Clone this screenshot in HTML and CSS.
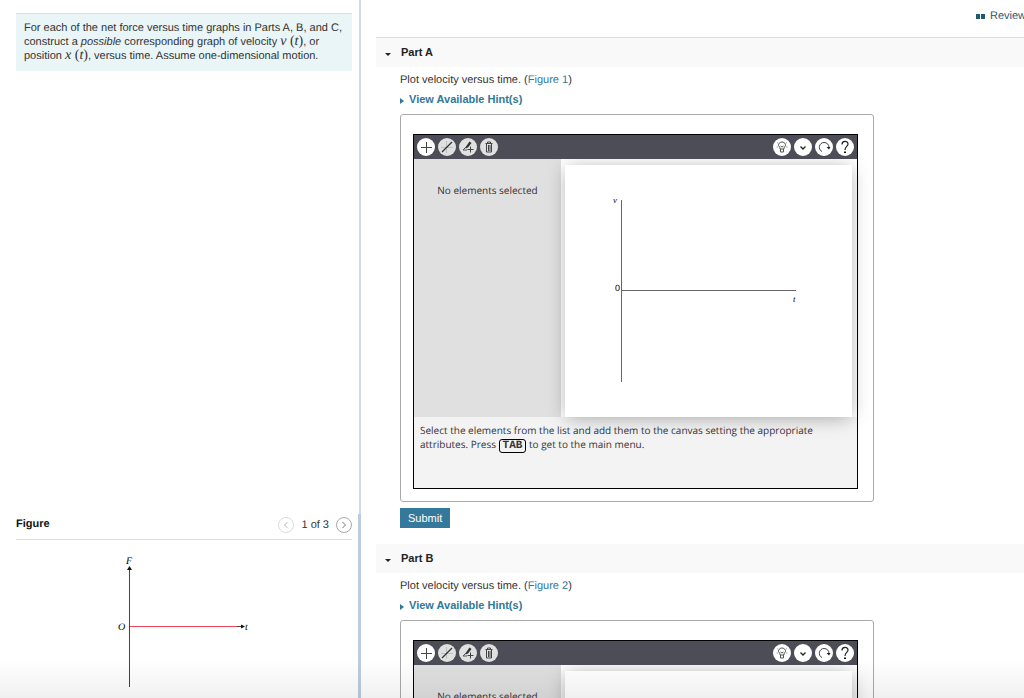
FILE: index.html
```html
<!DOCTYPE html>
<html lang="en">

<head>
    <meta charset="UTF-8">
    <title>Net Force and Velocity Graphs</title>
    <link rel="stylesheet" href="styles.css">
</head>

<body>

    <!-- shared toolbar icons -->
    <svg class="sprite" aria-hidden="true">
        <symbol id="icon-plus" viewBox="0 0 18 18">
            <path d="M9.500 4v11M4 9.500h11" stroke="#444" fill="none" />
        </symbol>
        <symbol id="icon-line" viewBox="0 0 18 18">
            <path d="M8.500 3v12M3 9.500h12" stroke="#c0c0c0" fill="none" />
            <path d="M4 14L14 4" stroke="#333" stroke-width="1.200" fill="none" />
        </symbol>
        <symbol id="icon-pen" viewBox="0 0 18 18">
            <path d="M10.500 3.500l2 1.500L9 9.500L6.500 10.500L7 8.500z" fill="#333" />
            <path d="M7 9L4 12h4" stroke="#555" fill="none" />
            <path d="M11.500 8.500v6M8.500 11.500h6" stroke="#444" fill="none" />
        </symbol>
        <symbol id="icon-trash" viewBox="0 0 18 18">
            <path d="M5.500 5.500h7M7.500 5V4h3v1M6.500 6v8h5V6M8.500 7v6M10 7v6" stroke="#444" fill="none" />
        </symbol>
        <symbol id="icon-bulb" viewBox="0 0 18 18">
            <path d="M7 11V9.500C4 7.500 6 4 9 4s5 3.500 2 5.500V11zM7.500 11v3h3v-3M7.500 8L9 9l1.500-1" stroke="#555" fill="none" />
            <path d="M4 4.500l1.500 1M14 4.500l-1.500 1M3.500 9h1.500M13 9h1.500" stroke="#aaa" fill="none" />
        </symbol>
        <symbol id="icon-chevron" viewBox="0 0 18 18">
            <path d="M6.500 8.500L9 11l2.500-2.500" stroke="#222" stroke-width="1.300" fill="none" />
        </symbol>
        <symbol id="icon-reset" viewBox="0 0 18 18">
            <path d="M7 13.500C2.500 11.500 4 4.500 9 4.500c3 0 5 2 5 5" stroke="#444" fill="none" />
            <path d="M11.500 9h4L14 11.500z" fill="#222" />
        </symbol>
        <symbol id="icon-help" viewBox="0 0 18 18">
            <path d="M6 6.500C6 2.500 12 2.500 12 6C12 8.500 9 8.500 9 12" stroke="#222" stroke-width="1.200" fill="none" />
            <path d="M8 13.500h2v1.500h-2z" fill="#111" />
        </symbol>
    </svg>

    <aside class="left">
        <section class="intro">
            For each of the net force versus time graphs in Parts A, B, and C, construct a <em>possible</em> corresponding graph of velocity <span class="math"><i>v</i> (<i>t</i>)</span>, or position <span class="math"><i>x</i> (<i>t</i>)</span>, versus time. Assume one-dimensional motion.
        </section>

        <section class="figure">
            <div class="figure-head">
                <h2>Figure</h2>
                <div class="pager">
                    <button type="button" aria-label="Previous figure" disabled>
                        <svg viewBox="0 0 14 14"><path d="M8.500 4l-3 3l3 3" /></svg>
                    </button>
                    <span>1 of 3</span>
                    <button type="button" aria-label="Next figure">
                        <svg viewBox="0 0 14 14"><path d="M5.500 4l3 3l-3 3" /></svg>
                    </button>
                </div>
            </div>
            <svg class="force-graph" viewBox="0 0 150 150" role="img" aria-label="Net force versus time">
                <path d="M17.500 27v120" stroke="#444" />
                <path d="M17.500 86.500h113" stroke="#444" />
                <path d="M18 86.500h107" stroke="#f04860" />
                <path d="M15 30l2.500-4l2.500 4zM129 84.500l4 2l-4 2z" fill="#111" />
                <text x="14" y="24">F</text>
                <text x="6" y="90">O</text>
                <text x="133" y="90">t</text>
            </svg>
        </section>
    </aside>

    <main class="right">
        <nav class="top">
            <a href="#review">
                <svg viewBox="0 0 9 6" aria-hidden="true"><path d="M0 1h4v5H0zM5 1h4v5H5z" /></svg>
                Review
            </a>
        </nav>

        <section class="part">
            <h2 class="part-head first"><button type="button">Part A</button></h2>
            <div class="part-body">
                <p>Plot velocity versus time. (<a href="#figure1">Figure 1</a>)</p>
                <button type="button" class="hints">View Available Hint(s)</button>
                <div class="answer">
                    <div class="editor">
                        <div class="toolbar">
                            <button type="button" aria-label="Add element"><svg><use href="#icon-plus" /></svg></button>
                            <button type="button" aria-label="Add line" class="off"><svg><use href="#icon-line" /></svg></button>
                            <button type="button" aria-label="Edit" class="off"><svg><use href="#icon-pen" /></svg></button>
                            <button type="button" aria-label="Delete" class="off"><svg><use href="#icon-trash" /></svg></button>
                            <span class="space"></span>
                            <button type="button" aria-label="Hint"><svg><use href="#icon-bulb" /></svg></button>
                            <button type="button" aria-label="More"><svg><use href="#icon-chevron" /></svg></button>
                            <button type="button" aria-label="Reset"><svg><use href="#icon-reset" /></svg></button>
                            <button type="button" aria-label="Help"><svg><use href="#icon-help" /></svg></button>
                        </div>
                        <div class="work">
                            <div class="elements">No elements selected</div>
                            <div class="canvas">
                                <svg viewBox="0 0 287 252" role="img" aria-label="Velocity versus time">
                                    <path d="M56.500 35v182M56 125.500h175" stroke="#666" fill="none" />
                                    <text x="48" y="38" class="axis-name">v</text>
                                    <text x="50" y="126" class="axis-zero">0</text>
                                    <text x="228" y="137" class="axis-name">t</text>
                                </svg>
                            </div>
                        </div>
                        <div class="help">Select the elements from the list and add them to the canvas setting the appropriate attributes. Press <kbd>TAB</kbd> to get to the main menu.</div>
                    </div>
                </div>
                <button type="submit" class="submit">Submit</button>
            </div>
        </section>

        <section class="part">
            <h2 class="part-head"><button type="button">Part B</button></h2>
            <div class="part-body">
                <p>Plot velocity versus time. (<a href="#figure2">Figure 2</a>)</p>
                <button type="button" class="hints">View Available Hint(s)</button>
                <div class="answer">
                    <div class="editor">
                        <div class="toolbar">
                            <button type="button" aria-label="Add element"><svg><use href="#icon-plus" /></svg></button>
                            <button type="button" aria-label="Add line" class="off"><svg><use href="#icon-line" /></svg></button>
                            <button type="button" aria-label="Edit" class="off"><svg><use href="#icon-pen" /></svg></button>
                            <button type="button" aria-label="Delete" class="off"><svg><use href="#icon-trash" /></svg></button>
                            <span class="space"></span>
                            <button type="button" aria-label="Hint"><svg><use href="#icon-bulb" /></svg></button>
                            <button type="button" aria-label="More"><svg><use href="#icon-chevron" /></svg></button>
                            <button type="button" aria-label="Reset"><svg><use href="#icon-reset" /></svg></button>
                            <button type="button" aria-label="Help"><svg><use href="#icon-help" /></svg></button>
                        </div>
                        <div class="work">
                            <div class="elements">No elements selected</div>
                            <div class="canvas"></div>
                        </div>
                    </div>
                </div>
            </div>
        </section>
    </main>

    <div class="fade"></div>

</body>

</html>
```
FILE: styles.css
```css
* {
    box-sizing: border-box;
}

body {
    margin: 0;
    height: 100vh;
    display: flex;
    overflow: hidden;
    background: #fff;
    color: #333;
    font-family: "Liberation Sans", Arial, sans-serif;
    font-size: 11px;
    line-height: 14px;
    text-rendering: geometricPrecision;
}

h2,
p {
    margin: 0;
    font-size: 11px;
}

button {
    padding: 0;
    border: 0;
    background: none;
    color: inherit;
    font: inherit;
    cursor: pointer;
}

a {
    color: #2f7899;
    text-decoration: none;
}

.sprite {
    position: absolute;
    width: 0;
    height: 0;
}

/* left column */
.left {
    flex: 0 0 361px;
    display: flex;
    flex-direction: column;
    justify-content: space-between;
    border-right: 2px solid #d0dbea;
}

.intro {
    margin: 13px 7px 0 16px;
    padding: 7px 8px 8px;
    border-top: 1px solid #dcdfe0;
    background: #eaf5f7;
}

.math {
    font-family: "Liberation Serif", "Times New Roman", serif;
    font-size: 14px;
    white-space: nowrap;
}

.figure {
    height: 184px;
    padding: 0 6px 0 16px;
    margin-right: -2px;
    border-right: 3px solid #bccde0;
}

.figure-head {
    display: flex;
    align-items: flex-start;
    justify-content: space-between;
    height: 26px;
    padding-top: 3px;
    border-bottom: 1px solid #ddd;
}

.figure-head h2 {
    color: #111;
}

.pager {
    display: flex;
    align-items: center;
    gap: 7px;
}

.pager button {
    width: 16px;
    height: 16px;
    border: 1px solid #aaa;
    border-radius: 50%;
}

.pager button:disabled {
    border-color: #ddd;
}

.pager svg {
    display: block;
    width: 14px;
    height: 14px;
    fill: none;
    stroke: #777;
}

.pager button:disabled svg {
    stroke: #bbb;
}

.force-graph {
    display: block;
    width: 150px;
    margin-left: 96px;
    font: italic 10px "Liberation Serif", serif;
}

/* right column */
.right {
    flex: 1;
    min-width: 0;
    padding-left: 15px;
}

.top {
    display: flex;
    justify-content: flex-end;
    height: 37px;
    padding-top: 9px;
}

.top a {
    margin-right: -2px;
    color: #1f5a70;
}

.top svg {
    width: 9px;
    height: 6px;
    margin-right: 2px;
    fill: #1f5a70;
}

.part {
    margin-bottom: 16px;
}

.part-head {
    height: 29px;
    padding: 7px 8px;
    background: #f9f9f9;
    line-height: 14px;
}

.part-head.first {
    height: 30px;
    border-top: 1px solid #ddd;
}

.part-head button {
    display: flex;
    align-items: center;
    gap: 10px;
    color: #222;
    font-weight: bold;
}

.part-head button::before {
    content: "";
    margin-top: 4px;
    border: 3px solid transparent;
    border-top-color: #222;
    border-bottom: 0;
    margin-left: 1px;
}

.part-body {
    padding: 6px 16px 0 24px;
}

.hints {
    display: flex;
    align-items: center;
    gap: 5px;
    margin: 5px 0 8px;
    color: #2f7899;
    font-weight: bold;
}

.hints::before {
    content: "";
    margin-top: 3px;
    border: 3px solid transparent;
    border-left: 4px solid #2f7899;
    border-right: 0;
}

.answer {
    max-width: 474px;
    padding: 19px 15px 12px 12px;
    border: 1px solid #aaa;
    border-radius: 3px;
}

.editor {
    border: 1px solid #000;
    background: #f3f3f3;
    font-family: "Open Sans", "Noto Sans", sans-serif;
    font-size: 10px;
}

.toolbar {
    position: relative;
    z-index: 2;
    display: flex;
    align-items: center;
    gap: 3px;
    height: 24px;
    padding: 0 3px;
    background: #4d4d57;
}

.toolbar button {
    width: 18px;
    height: 18px;
    border-radius: 50%;
    background: #fff;
}

.toolbar .off {
    background: #e0e0e0;
}

.toolbar svg {
    display: block;
    width: 18px;
    height: 18px;
}

.space {
    flex: 1;
}

.work {
    display: flex;
    gap: 4px;
    padding-right: 5px;
    background: #fff;
}

.elements {
    flex: 0 0 147px;
    padding: 24px 0 0;
    background: #e0e0e0;
    text-align: center;
}

.canvas {
    position: relative;
    z-index: 1;
    flex: 1;
    min-height: 252px;
    margin-top: 6px;
    background: #fff;
    box-shadow: 0 2px 18px -2px rgba(0, 0, 0, 0.35);
}

.canvas svg {
    display: block;
    width: 100%;
}

.axis-name {
    font: italic 9px "Liberation Serif", serif;
}

.axis-zero {
    font: 9px "Liberation Sans", sans-serif;
}

.help {
    position: relative;
    z-index: 1;
    min-height: 71px;
    padding: 6px;
}

kbd {
    padding: 0 3px;
    border: 1px solid #000;
    border-radius: 3px;
    font-family: "Liberation Mono", monospace;
    font-size: 11px;
    font-weight: bold;
}

.submit {
    display: block;
    height: 20px;
    margin-top: 6px;
    padding: 0 8px;
    background: #34799b;
    color: #fff;
}

/* soft shade along the bottom of the window */
.fade {
    position: fixed;
    right: 0;
    bottom: 0;
    left: 0;
    z-index: 3;
    height: 38px;
    background: linear-gradient(rgba(0, 0, 0, 0), rgba(0, 0, 0, 0.06));
    pointer-events: none;
}
```
